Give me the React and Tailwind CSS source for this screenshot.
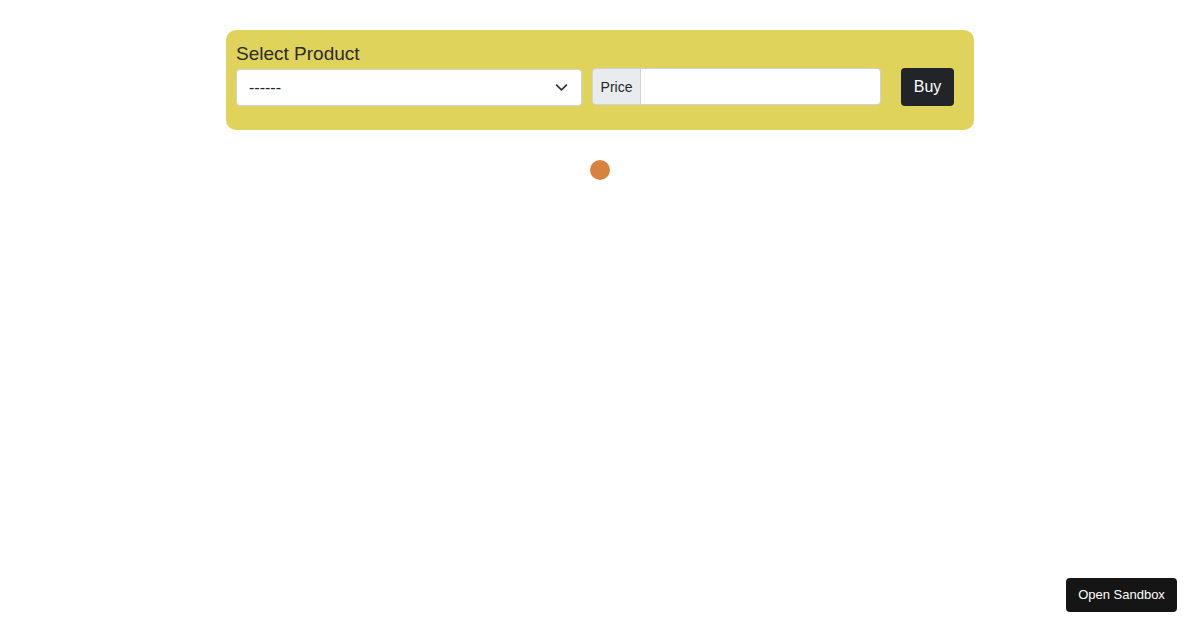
import React from "react";

export default function App() {
  return (
    <div className="relative w-[1200px] h-[630px] bg-white text-[#212529]" style={{ fontFamily: '"Liberation Sans", Arial, sans-serif' }}>
      <div className="flex flex-col items-center pt-[30px]">
        <div className="w-[748px] h-[100px] bg-[#e0d35c] rounded-[10px] pl-[10px] pr-[20px] pt-[13px]">
          <div className="text-[19px] leading-[22px] text-[#2b2b2b]">Select Product</div>
          <div className="flex items-start mt-[3px]">
            <div className="mt-[1px] w-[346px] h-[37px] bg-white border border-[#ced4da] rounded-[4px] flex items-center justify-between pl-[12px] pr-[13px]">
              <span className="text-[16px] leading-none">------</span>
              <svg width="13" height="13" viewBox="0 0 16 16" fill="none" stroke="#343a40" strokeWidth="2.2" strokeLinecap="round" strokeLinejoin="round">
                <path d="M2 5l6 6 6-6" />
              </svg>
            </div>
            <div className="ml-[10px] w-[289px] h-[37px] flex border border-[#ced4da] rounded-[4px] overflow-hidden">
              <div className="w-[48px] bg-[#e9ecef] border-r border-[#ced4da] flex items-center justify-center text-[14px] pt-[2px]">Price</div>
              <div className="flex-1 bg-white"></div>
            </div>
            <button className="ml-[20px] w-[53px] h-[38px] bg-[#212529] rounded-[4px] text-white text-[16px] flex items-center justify-center">Buy</button>
          </div>
        </div>
        <div className="mt-[30px] w-[20px] h-[20px] rounded-full bg-[#d9823f]"></div>
      </div>
      <button className="absolute left-[1066px] top-[578px] w-[111px] h-[34px] bg-[#151515] rounded-[4px] text-white text-[13px] flex items-center justify-center">Open Sandbox</button>
    </div>
  );
}
